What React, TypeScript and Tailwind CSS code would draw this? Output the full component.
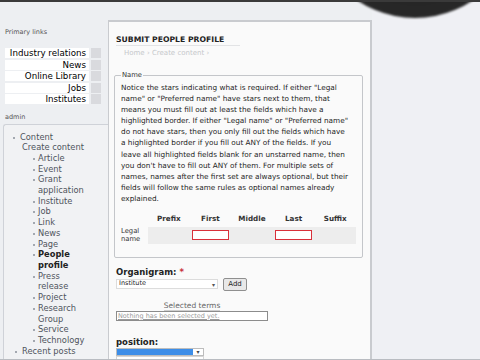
import React from 'react';

const primaryLinks = ['Industry relations', 'News', 'Online Library', 'Jobs', 'Institutes'];

const createItems: { label: string; active?: boolean }[] = [
  { label: 'Article' },
  { label: 'Event' },
  { label: 'Grant application' },
  { label: 'Institute' },
  { label: 'Job' },
  { label: 'Link' },
  { label: 'News' },
  { label: 'Page' },
  { label: 'People profile', active: true },
  { label: 'Press release' },
  { label: 'Project' },
  { label: 'Research Group' },
  { label: 'Service' },
  { label: 'Technology' },
];

const helpLines = [
  'Notice the stars indicating what is required. If either "Legal',
  'name" or "Preferred name" have stars next to them, that',
  'means you must fill out at least the fields which have a',
  'highlighted border. If either "Legal name" or "Preferred name"',
  'do not have stars, then you only fill out the fields which have',
  'a highlighted border if you fill out ANY of the fields. If you',
  'leave all highlighted fields blank for an unstarred name, then',
  "you don't have to fill out ANY of them. For multiple sets of",
  'names, names after the first set are always optional, but their',
  'fields will follow the same rules as optional names already',
  'explained.',
];

const nameParts = [
  { label: 'Prefix', required: false },
  { label: 'First', required: true },
  { label: 'Middle', required: false },
  { label: 'Last', required: true },
  { label: 'Suffix', required: false },
];

function Sidebar() {
  return (
    <aside className="w-[108px] shrink-0 flex flex-col">
      <div className="ml-[5px] mt-[26px] text-[6.5px] leading-[8px] text-[#555]">Primary links</div>
      <ul className="ml-[5px] mt-[12px] flex flex-col gap-[1.6px]">
        {primaryLinks.map((link) => (
          <li key={link} className="flex h-[10px]">
            <span className="w-[84px] bg-white pr-[3px] text-right text-[8.7px] leading-[10px] text-black whitespace-nowrap">
              {link}
            </span>
            <span className="ml-[2px] w-[10px] bg-[#d9dade]" />
          </li>
        ))}
      </ul>
      <div className="ml-[5px] mt-[8.6px] text-[6.5px] leading-[8px] text-[#555]">admin</div>
      <div className="ml-[3px] mt-[3px] flex-1 rounded-tl-[3px] border-l border-t border-[#cfd2d8] bg-[#f1f2f4] pl-[9px] pt-[6.6px] text-[8.3px] leading-[10.7px] text-[#4f545c]">
        <div className="flex">
          <span className="mt-[5px] mr-[5px] h-[2px] w-[2px] shrink-0 bg-[#a3a8b0]" />
          <span>Content</span>
        </div>
        <div className="pl-[9px]">Create content</div>
        <ul className="pl-[20px]">
          {createItems.map((item) => (
            <li key={item.label} className="flex">
              <span className="mt-[5px] mr-[3px] h-[2px] w-[2px] shrink-0 bg-[#a3a8b0]" />
              <span className={`w-[54px] ${item.active ? 'font-bold text-[#222]' : ''}`}>{item.label}</span>
            </li>
          ))}
        </ul>
        <div className="flex pl-[2px]">
          <span className="mt-[5px] mr-[5px] h-[2px] w-[2px] shrink-0 bg-[#a3a8b0]" />
          <span>Recent posts</span>
        </div>
      </div>
    </aside>
  );
}

function NameFieldset() {
  return (
    <fieldset className="ml-[-2px] mt-[13.5px] w-[249px] rounded-[2px] border border-[#c4c6ca] px-[6px] pb-[13px]">
      <legend className="px-[1px] text-[6.8px] leading-[9px] text-[#333]">Name</legend>
      <div className="pt-[2px] text-[7.3px] leading-[11.1px] text-[#1e1e1e]">
        {helpLines.map((line) => (
          <div key={line} className="whitespace-nowrap">
            {line}
          </div>
        ))}
      </div>
      <div className="mt-[10px] ml-[27px] grid grid-cols-5 text-[7.2px] leading-[9px] font-bold text-[#333]">
        {nameParts.map((p) => (
          <span key={p.label} className="text-center">
            {p.label}
          </span>
        ))}
      </div>
      <div className="mt-[3.5px] flex">
        <div className="w-[27px] text-[6.8px] leading-[8.5px] text-[#333]">
          Legal
          <br />
          name
        </div>
        <div className="grid h-[17px] flex-1 grid-cols-5 items-center bg-[#ededed]">
          {nameParts.map((p) => (
            <span
              key={p.label}
              className={`mx-auto h-[10px] w-[37px] ${p.required ? 'border border-[#d9303a] bg-white' : ''}`}
            />
          ))}
        </div>
      </div>
    </fieldset>
  );
}

function MainPanel() {
  return (
    <main className="mt-[18px] flex w-[264px] shrink-0 flex-col border-l border-r-2 border-t-2 border-[#c9cbcf] bg-[#fafafa] pl-[7px]">
      <h1 className="mt-[13px] w-[124px] border-b border-[#e2e3e5] text-[7.7px] font-bold leading-[10px] text-[#222]">
        SUBMIT PEOPLE PROFILE
      </h1>
      <div className="ml-[8px] mt-[2.5px] text-[7px] leading-[9px] text-[#c6c8cb]">Home › Create content ›</div>
      <NameFieldset />

      <div className="mt-[9.5px] text-[8.5px] font-bold leading-[11px] text-[#222]">
        Organigram: <span className="text-[#c8323c]">*</span>
      </div>
      <div className="flex items-start">
        <div className="mt-[1px] flex h-[10px] w-[102px] items-center justify-between border border-[#dcdcdc] bg-white pl-[2px] pr-[2px] text-[6.5px] text-[#222]">
          <span>Institute</span>
          <span className="text-[6px] text-[#555]">▾</span>
        </div>
        <button className="ml-[5px] h-[13px] w-[24px] rounded-[2px] border border-[#8f8f8f] bg-[#e8e8e8] text-[7px] leading-[11px] text-[#222]">
          Add
        </button>
      </div>

      <div className="mt-[9.5px] w-[152px] text-center text-[7.5px] leading-[9px] text-[#666]">
        <span className="border-b border-[#cfcfcf]">Selected terms</span>
      </div>
      <div className="mt-[1px] h-[10px] w-[152px] border border-[#8c8c8c] bg-white pl-[1px] text-[6.5px] leading-[8px] text-[#9a9a9a] underline">
        Nothing has been selected yet.
      </div>

      <div className="mt-[16px] text-[8.5px] font-bold leading-[11px] text-[#222]">position:</div>
      <div className="flex h-[10px] w-[88px] border border-[#bdbdbd] bg-white">
        <span className="flex-1 bg-[#3d8ee8]" />
        <span className="flex w-[10px] items-center justify-center text-[6px] leading-none text-[#444]">▾</span>
      </div>
      <div className="h-[6px] w-[88px] border-x border-t border-[#d6d6d6] bg-white" />
    </main>
  );
}

export default function App() {
  return (
    <div className="relative flex h-[360px] w-[480px] overflow-hidden border-b border-t-2 border-b-[#b9bcc1] border-t-[#3a3a3a] bg-[#edeff2] font-['DejaVu_Sans',sans-serif]">
      <Sidebar />
      <MainPanel />
      <div className="flex-1 bg-[#eff0f4]" />
      <div className="absolute left-[311px] top-[-192px] h-[208px] w-[208px] rounded-full bg-[radial-gradient(circle,#1c1c1c_0%,#2a2a2a_82%,#4d4d4d_95%,#8d8d8d_100%)] blur-[1px]" />
    </div>
  );
}
